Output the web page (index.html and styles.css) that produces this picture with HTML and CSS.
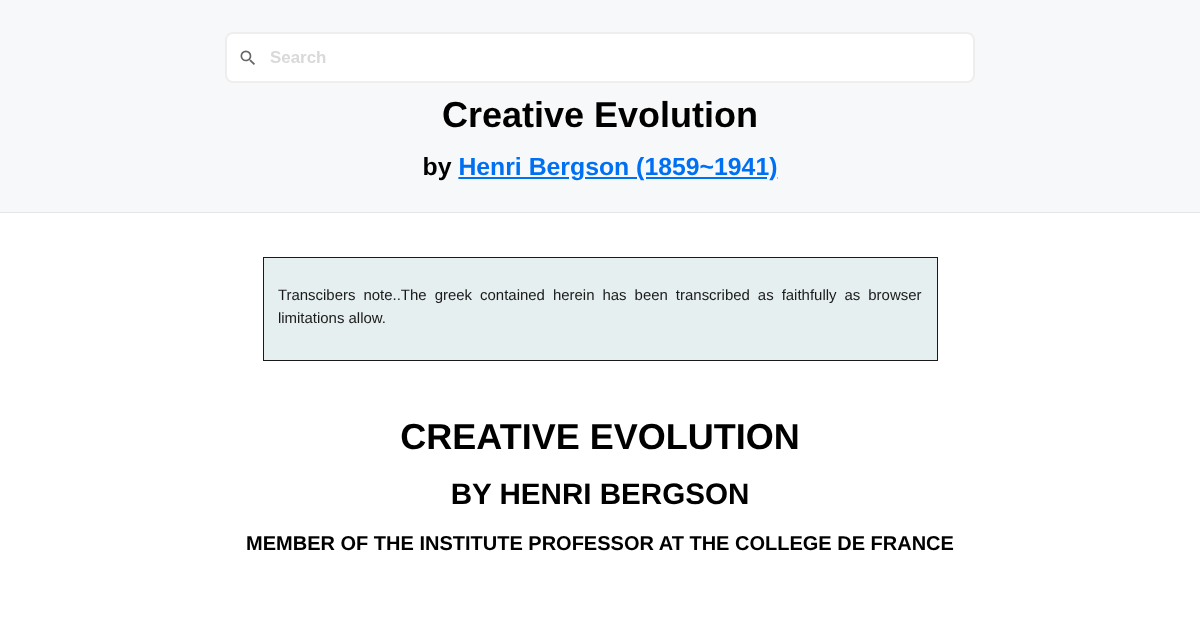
FILE: index.html
```html
<!DOCTYPE html>
<html lang="en">
<head>
    <meta charset="UTF-8">
    <meta name="viewport" content="width=device-width, initial-scale=1.0">
    <title>Creative Evolution</title>
    <link rel="stylesheet" href="styles.css">
</head>
<body>
    <div class="page">
        <header class="top">
            <div class="search">
                <svg class="search-icon" width="24" height="24" viewBox="0 0 24 24" fill="#666">
                    <path d="M15.5 14h-.79l-.28-.27A6.47 6.47 0 0 0 16 9.5 6.5 6.5 0 1 0 9.5 16c1.61 0 3.09-.59 4.23-1.57l.27.28v.79l5 4.99L20.49 19l-4.99-5zm-6 0C7.01 14 5 11.99 5 9.5S7.01 5 9.5 5 14 7.01 14 9.5 11.99 14 9.5 14z"/>
                </svg>
                <input class="search-input" type="text" placeholder="Search">
            </div>
            <h1 class="book-title">Creative Evolution</h1>
            <p class="byline">by <a href="#">Henri Bergson (1859~1941)</a></p>
        </header>

        <main class="content">
            <div class="note">
                <p>Transcibers note..The greek contained herein has been transcribed as faithfully as browser limitations allow.</p>
            </div>
            <h1 class="main-title">CREATIVE EVOLUTION</h1>
            <h2 class="main-author">BY HENRI BERGSON</h2>
            <h3 class="main-member">MEMBER OF THE INSTITUTE PROFESSOR AT THE COLLEGE DE FRANCE</h3>
        </main>
    </div>
</body>
</html>
```

FILE: styles.css
```css
body {
    font-family: "Liberation Sans", Arial, sans-serif;
    margin: 0;
    padding: 0;
    background-color: #fff;
    color: #000;
    text-rendering: geometricPrecision;
}

/* own layer, text comes out in greyscale */
.page {
    will-change: transform;
}

.top {
    background-color: #f7f8fa;
    border-bottom: 1px solid #e6e6ea;
    height: 213px;
    box-sizing: border-box;
    padding-top: 32px;
    text-align: center;
}

.search {
    width: 750px;
    height: 51px;
    margin: 0 auto;
    box-sizing: border-box;
    display: flex;
    align-items: center;
    background-color: #fff;
    border: 2px solid #eeeeef;
    border-radius: 8px;
    padding-left: 11px;
}

.search-icon {
    width: 20px;
    height: 20px;
    flex-shrink: 0;
}

.search-input {
    flex: 1;
    border: 0;
    outline: 0;
    margin-left: 12px;
    padding: 0;
    font-family: inherit;
    font-size: 16.9px;
    font-weight: bold;
    background: transparent;
}

.search-input::placeholder {
    color: #d9d9d9;
    opacity: 1;
}

.book-title {
    font-size: 36px;
    line-height: 41px;
    margin: 11px 0 0;
}

.byline {
    font-size: 24.8px;
    line-height: 28px;
    font-weight: bold;
    margin: 19px 0 0;
}

.byline a {
    color: #0070f3;
}

.content {
    padding-top: 44px;
    text-align: center;
}

.note {
    width: 675px;
    height: 104px;
    box-sizing: border-box;
    margin: 0 auto;
    border: 1px solid #1a1a1a;
    background-color: #e6eff0;
    padding: 26px 15px 0 14.4px;
    color: #1a1a1a;
    font-size: 14.96px;
    line-height: 23px;
    text-align: justify;
}

.note p {
    margin: 0;
}

.main-title {
    font-size: 36px;
    line-height: 41px;
    margin: 55px 0 0;
}

.main-author {
    font-size: 29.6px;
    line-height: 35px;
    margin: 20px 0 0;
}

.main-member {
    font-size: 20px;
    line-height: 24px;
    margin: 20px 0 0;
}
```
